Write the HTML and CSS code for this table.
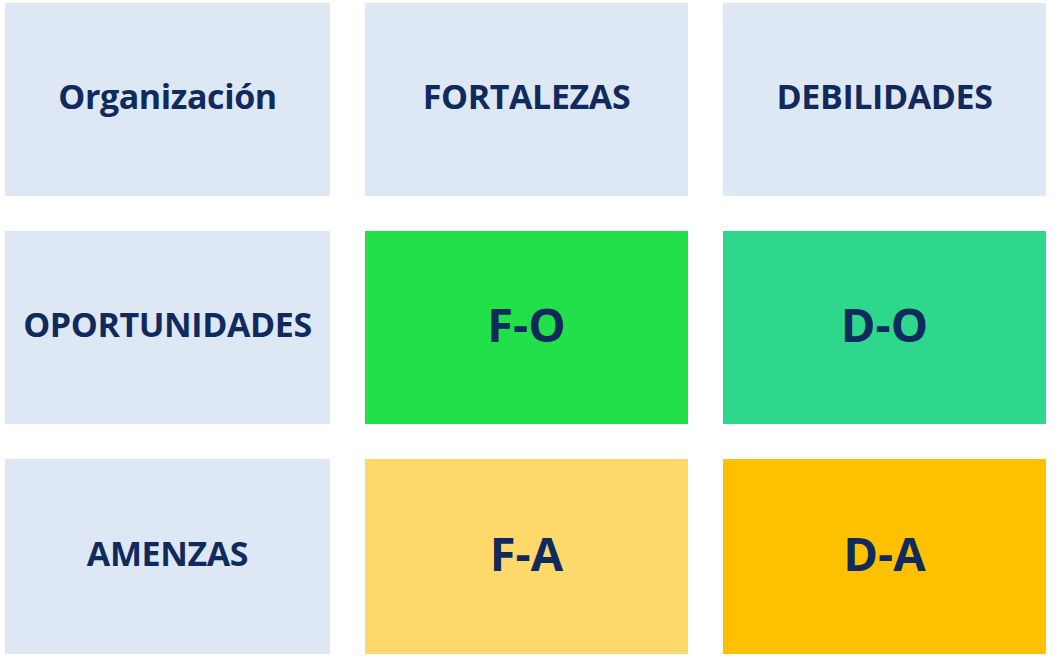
FILE: index.html
```html
<!DOCTYPE html>
<html lang="es">
<head>
<meta charset="utf-8">
<title>Matriz FODA</title>
<link rel="stylesheet" href="styles.css">
</head>
<body>
<div class="grid">
  <div class="cell head">Organización</div>
  <div class="cell head">FORTALEZAS</div>
  <div class="cell head">DEBILIDADES</div>
  <div class="cell head">OPORTUNIDADES</div>
  <div class="cell big fo">F-O</div>
  <div class="cell big do">D-O</div>
  <div class="cell head">AMENZAS</div>
  <div class="cell big fa">F-A</div>
  <div class="cell big da">D-A</div>
</div>
</body>
</html>
```
FILE: styles.css
```css
html, body {
  margin: 0;
  padding: 0;
  background: #ffffff;
}
body {
  font-family: "Open Sans", "Liberation Sans", sans-serif;
  color: #112a5e;
}
.grid {
  display: grid;
  grid-template-columns: 325px 323px 323px;
  grid-template-rows: 193px 193px 195px;
  column-gap: 35px;
  row-gap: 35px;
  padding: 3px 0 0 5px;
}
.cell {
  display: flex;
  align-items: center;
  justify-content: center;
  background: #dde8f4;
  font-weight: 700;
  padding-bottom: 8px;
  box-sizing: border-box;
}
.head {
  font-size: 34px;
  letter-spacing: -0.4px;
}
.big {
  font-size: 47px;
}
.fo { background: #22e04a; }
.do { background: #2dd88c; }
.fa { background: #fdd86b; }
.da { background: #ffc000; }
```
